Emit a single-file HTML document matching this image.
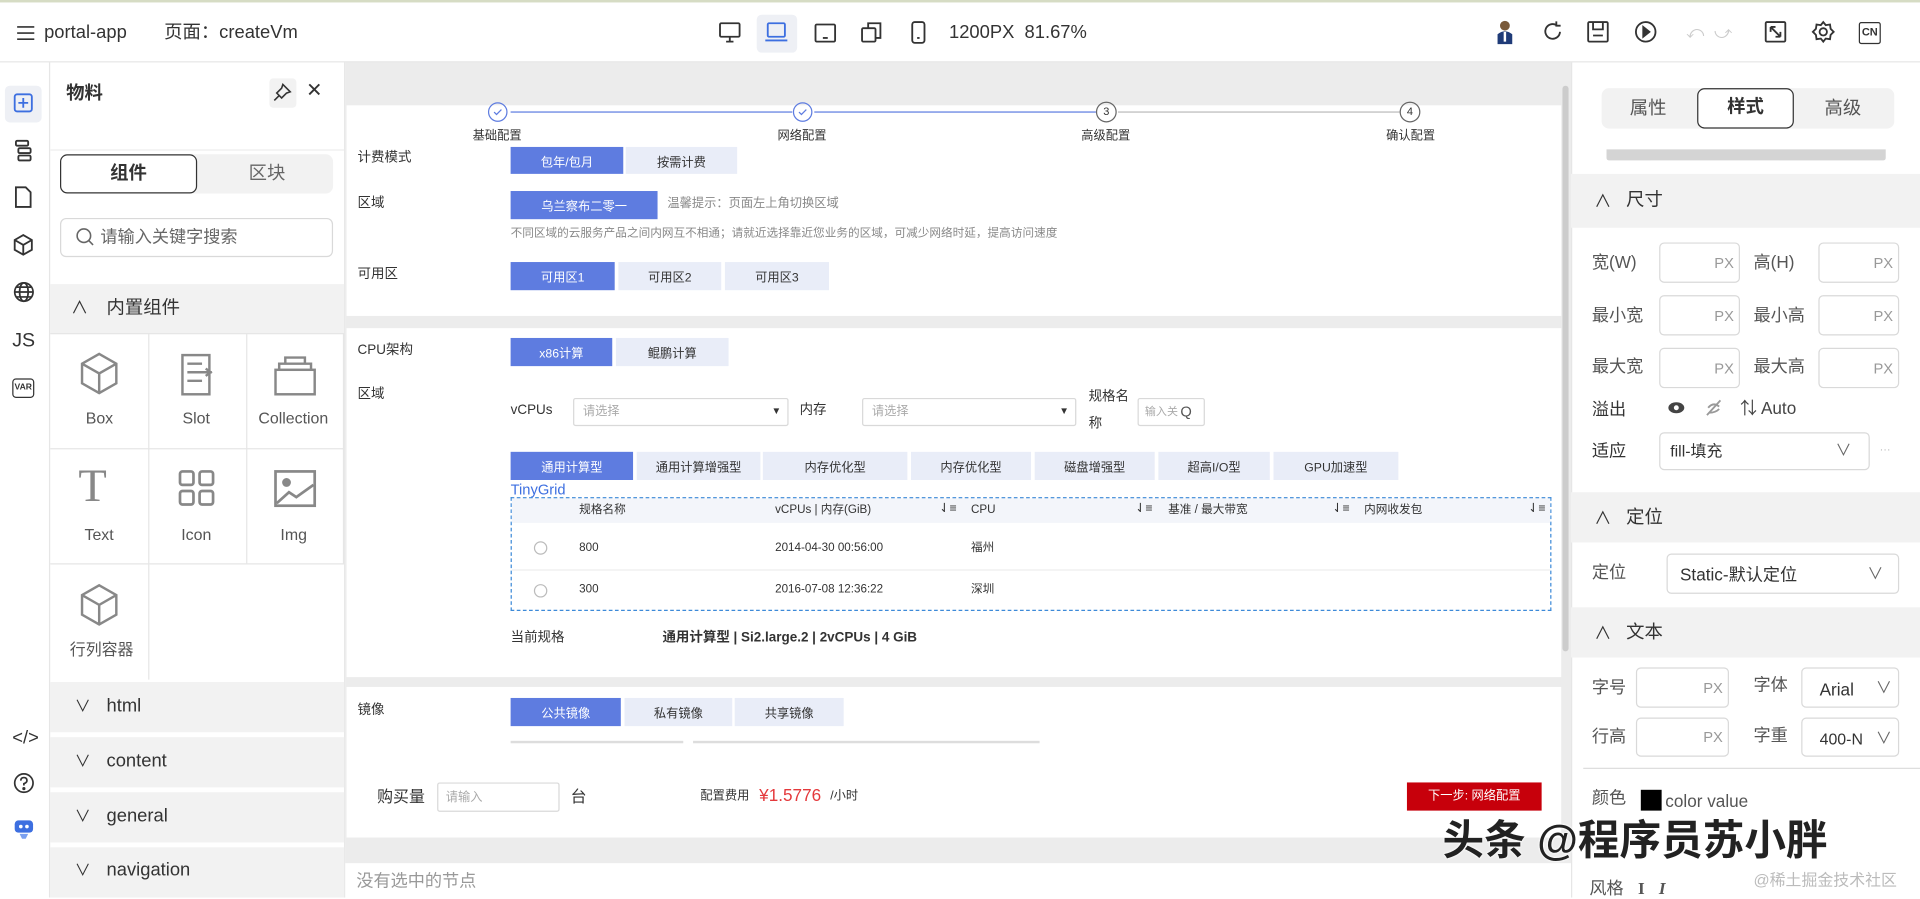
<!DOCTYPE html>
<html><head><meta charset="utf-8"><style>
*{box-sizing:border-box;margin:0;padding:0}
html,body{width:1920px;height:897px;overflow:hidden;background:#fff}
#w{position:absolute;left:0;top:0;width:1568px;height:733px;transform:scale(1.22449);transform-origin:0 0;font-family:"Liberation Sans","Noto Sans CJK SC",sans-serif;color:#333;font-size:14px}
.a{position:absolute}
.t{position:absolute;white-space:nowrap;line-height:1}
.bb{position:absolute;background:#5e7ce0;color:#fff;font-size:10px;display:flex;align-items:center;justify-content:center}
.lb{position:absolute;background:#e9edf8;color:#333;font-size:10px;display:flex;align-items:center;justify-content:center}
.inp{position:absolute;border:1px solid #d9d9d9;border-radius:4px;background:#fff}
.px{position:absolute;right:4px;top:50%;transform:translateY(-50%);font-size:12px;color:#999}
.gh{position:absolute;left:1283px;width:285px;background:#f2f2f2}
.row{position:absolute;left:41px;width:240px;height:41px;background:#f2f2f2;font-size:15px}
svg{position:absolute;overflow:visible}
</style></head><body><div id="w">
<!-- top bar -->
<div class="a" style="left:0;top:0;width:1568px;height:2px;background:#d6dcc4"></div>
<div class="a" style="left:0;top:50px;width:1568px;height:1px;background:#e6e6e6"></div>
<svg style="left:14px;top:21px" width="14" height="12"><path d="M0 1H14M0 6H14M0 11H14" stroke="#333" stroke-width="1.3"/></svg>
<div class="t" style="left:36px;top:19px;font-size:15px">portal-app</div>
<div class="t" style="left:134px;top:19px;font-size:15px">页面：createVm</div>
<div class="a" style="left:618px;top:12px;width:33px;height:31px;background:#eef0f5;border-radius:4px"></div>
<svg style="left:587px;top:18px" width="18" height="18" fill="none" stroke="#333" stroke-width="1.5"><rect x="1" y="1" width="16" height="11" rx="1"/><path d="M6 16H12M9 12V16"/></svg>
<svg style="left:625px;top:18px" width="18" height="18" fill="none" stroke="#3d6fe0" stroke-width="1.5"><rect x="2" y="1" width="14" height="11" rx="1"/><path d="M0 15H18"/></svg>
<svg style="left:665px;top:18px" width="18" height="18" fill="none" stroke="#333" stroke-width="1.5"><rect x="1" y="2" width="16" height="14" rx="1"/><path d="M7 13H11"/></svg>
<svg style="left:703px;top:17px" width="18" height="18" fill="none" stroke="#333" stroke-width="1.5"><rect x="1" y="6" width="11" height="11" rx="1"/><path d="M6 6V2H16V14H12"/></svg>
<svg style="left:744px;top:17px" width="12" height="19" fill="none" stroke="#333" stroke-width="1.5"><rect x="1" y="1" width="10" height="17" rx="2"/><path d="M5 14H7"/></svg>
<div class="t" style="left:775px;top:19px;font-size:15px">1200PX&nbsp; 81.67%</div>
<svg style="left:1221px;top:16px" width="16" height="20"><circle cx="8" cy="5" r="4" fill="#7a5a3a"/><path d="M2 20V12Q8 7 14 12V20Z" fill="#1f3b78"/><path d="M7 10H9V18H7Z" fill="#fff"/></svg>
<svg style="left:1259px;top:17px" width="18" height="18" fill="none" stroke="#333" stroke-width="1.5"><path d="M15 9A6 6 0 1 1 12 3.5M12 0.5V4H15.5"/></svg>
<svg style="left:1296px;top:17px" width="18" height="18" fill="none" stroke="#333" stroke-width="1.5"><rect x="1" y="1" width="16" height="16" rx="1"/><path d="M5 1V7H13V1M5 12H13"/></svg>
<svg style="left:1335px;top:17px" width="18" height="18" fill="none" stroke="#333" stroke-width="1.5"><circle cx="9" cy="9" r="8"/><path d="M7 5L12 9L7 13Z" fill="#333"/></svg>
<div class="t" style="left:1377px;top:19px;color:#ccc;font-size:14px">⤺&nbsp; ⤻</div>
<svg style="left:1441px;top:17px" width="18" height="18" fill="none" stroke="#333" stroke-width="1.5"><rect x="1" y="1" width="16" height="16" rx="1"/><path d="M5 5L13 13M5 5V9M5 5H9M13 13V9M13 13H9"/></svg>
<svg style="left:1480px;top:17px" width="18" height="18" fill="none" stroke="#333" stroke-width="1.5"><circle cx="9" cy="9" r="3"/><path d="M9 1L11 3.5L14.5 3L15 6.5L17.5 9L15 11.5L14.5 15L11 14.5L9 17L7 14.5L3.5 15L3 11.5L0.5 9L3 6.5L3.5 3L7 3.5Z"/></svg>
<div class="a" style="left:1518px;top:18px;width:18px;height:18px;border:1.5px solid #333;border-radius:2px;font-size:9px;font-weight:bold;text-align:center;line-height:15px">CN</div>
<!-- left strip -->
<div class="a" style="left:40px;top:51px;width:1px;height:682px;background:#e6e6e6"></div>
<div class="a" style="left:4px;top:70px;width:30px;height:30px;background:#eef0f5;border-radius:4px"></div>
<svg style="left:11px;top:76px" width="16" height="16" fill="none" stroke="#3d6fe0" stroke-width="1.5"><rect x="1" y="1" width="14" height="14" rx="2"/><path d="M8 4V12M4 8H12"/></svg>
<svg style="left:12px;top:114px" width="14" height="18" fill="none" stroke="#333" stroke-width="1.5"><rect x="1" y="1" width="10" height="4" rx="1"/><rect x="3" y="7" width="10" height="4" rx="1"/><rect x="3" y="13" width="10" height="4" rx="1"/></svg>
<svg style="left:12px;top:152px" width="14" height="18" fill="none" stroke="#333" stroke-width="1.5"><path d="M1 1H9L13 5V17H1Z"/></svg>
<svg style="left:11px;top:191px" width="16" height="18" fill="none" stroke="#333" stroke-width="1.5"><path d="M8 1L15 5V13L8 17L1 13V5ZM1 5L8 9L15 5M8 9V17"/></svg>
<svg style="left:11px;top:230px" width="17" height="17" fill="none" stroke="#333" stroke-width="1.4"><circle cx="8.5" cy="8.5" r="7.5"/><ellipse cx="8.5" cy="8.5" rx="3.5" ry="7.5"/><path d="M1 8.5H16M2.5 4.5H14.5M2.5 12.5H14.5"/></svg>
<div class="t" style="left:10px;top:271px;font-size:16px">JS</div>
<div class="a" style="left:10px;top:309px;width:18px;height:16px;border:1.5px solid #333;border-radius:3px;font-size:7px;font-weight:bold;text-align:center;line-height:13px">VAR</div>
<div class="t" style="left:10px;top:595px;font-size:15px">&lt;/&gt;</div>
<svg style="left:11px;top:631px" width="17" height="17" fill="none" stroke="#333" stroke-width="1.4"><circle cx="8.5" cy="8.5" r="7.5"/><path d="M6 6.5Q6 4 8.5 4Q11 4 11 6.5Q11 8 8.5 9V10.5"/><circle cx="8.5" cy="13" r=".6" fill="#333"/></svg>
<svg style="left:11px;top:668px" width="17" height="17"><rect x="1" y="2" width="15" height="10" rx="3" fill="#3d6fe0"/><circle cx="6" cy="7" r="1.5" fill="#fff"/><circle cx="11" cy="7" r="1.5" fill="#fff"/><path d="M5 13H12L10 17H7Z" fill="#7aa0f0"/></svg>
<!-- material panel -->
<div class="a" style="left:281px;top:51px;width:1px;height:682px;background:#e6e6e6"></div>
<div class="t" style="left:54px;top:69px;font-size:15px;font-weight:bold">物料</div>
<div class="a" style="left:220px;top:64px;width:22px;height:24px;background:#f2f2f2;border-radius:3px"></div>
<svg style="left:224px;top:68px" width="14" height="15" fill="none" stroke="#333" stroke-width="1.3"><path d="M7 1L13 7L10 8L6 12L2 8L6 4ZM4 10L0 14"/></svg>
<div class="t" style="left:250px;top:67px;font-size:16px">✕</div>
<div class="a" style="left:41px;top:122px;width:240px;height:1px;background:#eee"></div>
<div class="a" style="left:49px;top:126px;width:223px;height:32px;background:#f2f2f2;border-radius:6px"></div>
<div class="a" style="left:49px;top:126px;width:112px;height:32px;background:#fff;border:1.5px solid #333;border-radius:6px;font-size:15px;font-weight:bold;text-align:center;line-height:29px">组件</div>
<div class="t" style="left:203px;top:134px;font-size:15px;color:#666">区块</div>
<div class="inp" style="left:49px;top:178px;width:223px;height:32px;border-radius:5px"></div>
<svg style="left:62px;top:186px" width="15" height="16" fill="none" stroke="#666" stroke-width="1.3"><circle cx="6.5" cy="6.5" r="5.5"/><path d="M10.5 10.5L14 14"/></svg>
<div class="t" style="left:82px;top:186px;font-size:14px;color:#666">请输入关键字搜索</div>
<div class="a" style="left:41px;top:232px;width:240px;height:40px;background:#f2f2f2"></div>
<div class="t" style="left:58px;top:244px;font-size:14px">∧</div>
<div class="t" style="left:87px;top:244px;font-size:15px">内置组件</div>
<svg style="left:41px;top:272px" width="240" height="284" fill="none" stroke="#e6e6e6"><path d="M0 .5H240M0 94.5H240M0 188.5H240M80.5 0V283M160.5 0V188M239.5 0V188M80.5 188V283"/></svg>
<svg style="left:65px;top:287px" width="32" height="36" fill="none" stroke="#888" stroke-width="2"><path d="M16 2L30 10V26L16 34L2 26V10ZM2 10L16 18L30 10M16 18V34"/></svg>
<svg style="left:148px;top:289px" width="26" height="34" fill="none" stroke="#888" stroke-width="2"><rect x="1" y="1" width="22" height="32"/><path d="M5 8H17M5 15H25M5 22H17M20 12L24 15L20 18"/></svg>
<svg style="left:224px;top:289px" width="34" height="34" fill="none" stroke="#888" stroke-width="2"><rect x="1" y="13" width="32" height="20"/><path d="M4 13V8H30V13M9 8V3H25V8"/></svg>
<div class="t" style="left:70px;top:335px;font-size:13px;color:#555">Box</div>
<div class="t" style="left:149px;top:335px;font-size:13px;color:#555">Slot</div>
<div class="t" style="left:211px;top:335px;font-size:13px;color:#555">Collection</div>
<div class="t" style="left:64px;top:378px;font-size:38px;color:#888;font-family:'Liberation Serif',serif">T</div>
<svg style="left:146px;top:384px" width="30" height="30" fill="none" stroke="#888" stroke-width="2.2"><rect x="1" y="1" width="11" height="11" rx="2"/><rect x="17" y="1" width="11" height="11" rx="2"/><rect x="1" y="17" width="11" height="11" rx="2"/><rect x="17" y="17" width="11" height="11" rx="2"/></svg>
<svg style="left:224px;top:384px" width="34" height="30" fill="none" stroke="#888" stroke-width="2.2"><rect x="1" y="1" width="32" height="28"/><circle cx="10" cy="10" r="2.5" fill="#888"/><path d="M2 27L12 18L18 22L32 12"/></svg>
<div class="t" style="left:69px;top:430px;font-size:13px;color:#555">Text</div>
<div class="t" style="left:148px;top:430px;font-size:13px;color:#555">Icon</div>
<div class="t" style="left:229px;top:430px;font-size:13px;color:#555">Img</div>
<svg style="left:65px;top:476px" width="32" height="36" fill="none" stroke="#888" stroke-width="2"><path d="M16 2L30 10V26L16 34L2 26V10ZM2 10L16 18L30 10M16 18V34"/></svg>
<div class="t" style="left:57px;top:524px;font-size:13px;color:#555">行列容器</div>
<div class="row" style="top:557px"><span class="t" style="left:20px;top:13px;font-size:13px">∨</span><span class="t" style="left:46px;top:12px">html</span></div>
<div class="row" style="top:602px"><span class="t" style="left:20px;top:13px;font-size:13px">∨</span><span class="t" style="left:46px;top:12px">content</span></div>
<div class="row" style="top:647px"><span class="t" style="left:20px;top:13px;font-size:13px">∨</span><span class="t" style="left:46px;top:12px">general</span></div>
<div class="row" style="top:692px"><span class="t" style="left:20px;top:12px;font-size:13px">∨</span><span class="t" style="left:46px;top:11px">navigation</span></div>
<!-- canvas -->
<div class="a" style="left:282px;top:51px;width:1001px;height:654px;background:#ececec"></div>
<div class="a" style="left:283px;top:86px;width:992px;height:172px;background:#fff"></div>
<div class="a" style="left:283px;top:268px;width:992px;height:285px;background:#fff"></div>
<div class="a" style="left:283px;top:561px;width:992px;height:123px;background:#fff"></div>
<div class="a" style="left:1276px;top:70px;width:5px;height:462px;background:#ccc;border-radius:3px"></div>
<div class="a" style="left:282px;top:705px;width:1001px;height:28px;background:#fff"></div>
<div class="t" style="left:291px;top:712px;font-size:14px;color:#999">没有选中的节点</div>
<!-- stepper -->
<div class="a" style="left:417px;top:91px;width:230px;height:1px;background:#5e7ce0"></div>
<div class="a" style="left:665px;top:91px;width:230px;height:1px;background:#5e7ce0"></div>
<div class="a" style="left:913px;top:91px;width:230px;height:1px;background:#bbb"></div>
<svg style="left:398px;top:83px" width="17" height="17" fill="none" stroke="#5e7ce0"><circle cx="8.5" cy="8.5" r="7.5"/><path d="M5.5 8.5L7.5 10.5L11.5 6.5"/></svg>
<svg style="left:647px;top:83px" width="17" height="17" fill="none" stroke="#5e7ce0"><circle cx="8.5" cy="8.5" r="7.5"/><path d="M5.5 8.5L7.5 10.5L11.5 6.5"/></svg>
<div class="a" style="left:895px;top:83px;width:17px;height:17px;border:1px solid #666;border-radius:50%;font-size:9px;text-align:center;line-height:15px">3</div>
<div class="a" style="left:1143px;top:83px;width:17px;height:17px;border:1px solid #666;border-radius:50%;font-size:9px;text-align:center;line-height:15px">4</div>
<div class="t" style="left:386px;top:107px;font-size:10px">基础配置</div>
<div class="t" style="left:635px;top:107px;font-size:10px">网络配置</div>
<div class="t" style="left:883px;top:107px;font-size:10px">高级配置</div>
<div class="t" style="left:1132px;top:107px;font-size:10px">确认配置</div>
<!-- form -->
<div class="t" style="left:292px;top:124px;font-size:11px">计费模式</div>
<div class="bb" style="left:417px;top:120px;width:92px;height:22px">包年/包月</div>
<div class="lb" style="left:511px;top:120px;width:91px;height:22px">按需计费</div>
<div class="t" style="left:292px;top:161px;font-size:11px">区域</div>
<div class="bb" style="left:417px;top:156px;width:120px;height:23px">乌兰察布二零一</div>
<div class="t" style="left:545px;top:162px;font-size:10px;color:#888">温馨提示：页面左上角切换区域</div>
<div class="t" style="left:417px;top:186px;font-size:9.5px;color:#888">不同区域的云服务产品之间内网互不相通；请就近选择靠近您业务的区域，可减少网络时延，提高访问速度</div>
<div class="t" style="left:292px;top:219px;font-size:11px">可用区</div>
<div class="bb" style="left:417px;top:214px;width:85px;height:23px">可用区1</div>
<div class="lb" style="left:505px;top:214px;width:84px;height:23px">可用区2</div>
<div class="lb" style="left:592px;top:214px;width:85px;height:23px">可用区3</div>
<div class="t" style="left:292px;top:281px;font-size:11px">CPU架构</div>
<div class="bb" style="left:417px;top:276px;width:83px;height:23px">x86计算</div>
<div class="lb" style="left:503px;top:276px;width:92px;height:23px">鲲鹏计算</div>
<div class="t" style="left:292px;top:317px;font-size:11px">区域</div>
<div class="t" style="left:417px;top:330px;font-size:11px">vCPUs</div>
<div class="inp" style="left:468px;top:325px;width:176px;height:23px;border-radius:2px"><span class="t" style="left:7px;top:6px;font-size:10px;color:#aaa">请选择</span><span class="t" style="right:5px;top:6px;font-size:8px;color:#333">▼</span></div>
<div class="t" style="left:653px;top:330px;font-size:11px">内存</div>
<div class="inp" style="left:704px;top:325px;width:175px;height:23px;border-radius:2px"><span class="t" style="left:7px;top:6px;font-size:10px;color:#aaa">请选择</span><span class="t" style="right:5px;top:6px;font-size:8px;color:#333">▼</span></div>
<div class="t" style="left:889px;top:319px;font-size:11px">规格名</div>
<div class="t" style="left:889px;top:341px;font-size:11px">称</div>
<div class="inp" style="left:929px;top:325px;width:55px;height:23px;border-radius:2px"><span class="t" style="left:5px;top:6px;font-size:9px;color:#aaa">输入关</span><span class="t" style="left:34px;top:4px;font-size:12px;color:#555">Q</span></div>
<div class="bb" style="left:417px;top:369px;width:100px;height:23px">通用计算型</div>
<div class="lb" style="left:520px;top:369px;width:101px;height:23px">通用计算增强型</div>
<div class="lb" style="left:623px;top:369px;width:118px;height:23px">内存优化型</div>
<div class="lb" style="left:744px;top:369px;width:98px;height:23px">内存优化型</div>
<div class="lb" style="left:845px;top:369px;width:98px;height:23px">磁盘增强型</div>
<div class="lb" style="left:946px;top:369px;width:91px;height:23px">超高I/O型</div>
<div class="lb" style="left:1040px;top:369px;width:102px;height:23px">GPU加速型</div>
<div class="t" style="left:417px;top:394px;font-size:12px;color:#3d6fe0">TinyGrid</div>
<div class="a" style="left:417px;top:406px;width:850px;height:93px;border:1px dashed #3d8ad8"></div>
<div class="a" style="left:418px;top:407px;width:848px;height:20px;background:#f3f5fa"></div>
<div class="a" style="left:418px;top:465px;width:848px;height:1px;background:#eee"></div>
<div class="t" style="left:473px;top:412px;font-size:9.5px">规格名称</div>
<div class="t" style="left:633px;top:412px;font-size:9.5px">vCPUs | 内存(GiB)</div>
<div class="t" style="left:793px;top:412px;font-size:9.5px">CPU</div>
<div class="t" style="left:954px;top:412px;font-size:9.5px">基准 / 最大带宽</div>
<div class="t" style="left:1114px;top:412px;font-size:9.5px">内网收发包</div>
<div class="t" style="left:767px;top:411px;font-size:10px">⇃≡</div>
<div class="t" style="left:927px;top:411px;font-size:10px">⇃≡</div>
<div class="t" style="left:1088px;top:411px;font-size:10px">⇃≡</div>
<div class="t" style="left:1248px;top:411px;font-size:10px">⇃≡</div>
<div class="a" style="left:436px;top:442px;width:11px;height:11px;border:1px solid #bbb;border-radius:50%"></div>
<div class="a" style="left:436px;top:477px;width:11px;height:11px;border:1px solid #bbb;border-radius:50%"></div>
<div class="t" style="left:473px;top:443px;font-size:9.5px">800</div>
<div class="t" style="left:633px;top:443px;font-size:9.5px">2014-04-30 00:56:00</div>
<div class="t" style="left:793px;top:443px;font-size:9.5px">福州</div>
<div class="t" style="left:473px;top:477px;font-size:9.5px">300</div>
<div class="t" style="left:633px;top:477px;font-size:9.5px">2016-07-08 12:36:22</div>
<div class="t" style="left:793px;top:477px;font-size:9.5px">深圳</div>
<div class="t" style="left:417px;top:516px;font-size:11px">当前规格</div>
<div class="t" style="left:541px;top:516px;font-size:11px;font-weight:bold">通用计算型 | Si2.large.2 | 2vCPUs | 4 GiB</div>
<div class="t" style="left:292px;top:575px;font-size:11px">镜像</div>
<div class="bb" style="left:417px;top:570px;width:90px;height:23px">公共镜像</div>
<div class="lb" style="left:510px;top:570px;width:88px;height:23px">私有镜像</div>
<div class="lb" style="left:600px;top:570px;width:89px;height:23px">共享镜像</div>
<div class="a" style="left:417px;top:605px;width:141px;height:2px;background:#ddd"></div>
<div class="a" style="left:566px;top:605px;width:283px;height:2px;background:#ddd"></div>
<div class="t" style="left:308px;top:644px;font-size:13px">购买量</div>
<div class="inp" style="left:357px;top:639px;width:100px;height:24px;border-radius:2px"><span class="t" style="left:6px;top:7px;font-size:10px;color:#aaa">请输入</span></div>
<div class="t" style="left:466px;top:644px;font-size:13px">台</div>
<div class="t" style="left:572px;top:646px;font-size:10px">配置费用</div>
<div class="t" style="left:620px;top:642px;font-size:14px;color:#e4393c">¥1.5776</div>
<div class="t" style="left:678px;top:646px;font-size:10px">/小时</div>
<div class="a" style="left:1149px;top:639px;width:110px;height:23px;background:#c7000b;color:#fff;font-size:10px;text-align:center;line-height:23px">下一步: 网络配置</div>
<!-- right panel -->
<div class="a" style="left:1283px;top:51px;width:1px;height:682px;background:#e6e6e6"></div>
<div class="a" style="left:1308px;top:72px;width:239px;height:33px;background:#f2f2f2;border-radius:6px"></div>
<div class="t" style="left:1331px;top:81px;font-size:15px;color:#555">属性</div>
<div class="a" style="left:1386px;top:72px;width:79px;height:33px;background:#fff;border:1.5px solid #333;border-radius:6px;font-size:15px;font-weight:bold;text-align:center;line-height:30px">样式</div>
<div class="t" style="left:1490px;top:81px;font-size:15px;color:#555">高级</div>
<div class="a" style="left:1312px;top:122px;width:228px;height:9px;background:#d4d4d4;border-radius:0 0 2px 2px"></div>
<div class="gh" style="top:142px;height:44px"></div>
<div class="t" style="left:1302px;top:157px;font-size:14px">∧</div>
<div class="t" style="left:1328px;top:156px;font-size:15px">尺寸</div>
<div class="t" style="left:1300px;top:207px;font-size:14px;color:#555">宽(W)</div>
<div class="inp" style="left:1355px;top:198px;width:66px;height:33px"><span class="px">PX</span></div>
<div class="t" style="left:1432px;top:207px;font-size:14px;color:#555">高(H)</div>
<div class="inp" style="left:1485px;top:198px;width:66px;height:33px"><span class="px">PX</span></div>
<div class="t" style="left:1300px;top:250px;font-size:14px;color:#555">最小宽</div>
<div class="inp" style="left:1355px;top:241px;width:66px;height:33px"><span class="px">PX</span></div>
<div class="t" style="left:1432px;top:250px;font-size:14px;color:#555">最小高</div>
<div class="inp" style="left:1485px;top:241px;width:66px;height:33px"><span class="px">PX</span></div>
<div class="t" style="left:1300px;top:292px;font-size:14px;color:#555">最大宽</div>
<div class="inp" style="left:1355px;top:284px;width:66px;height:33px"><span class="px">PX</span></div>
<div class="t" style="left:1432px;top:292px;font-size:14px;color:#555">最大高</div>
<div class="inp" style="left:1485px;top:284px;width:66px;height:33px"><span class="px">PX</span></div>
<div class="t" style="left:1300px;top:327px;font-size:14px">溢出</div>
<svg style="left:1362px;top:327px" width="14" height="12"><ellipse cx="7" cy="6" rx="6.5" ry="4.5" fill="#444"/><circle cx="7" cy="6" r="2" fill="#fff"/></svg>
<svg style="left:1392px;top:326px" width="15" height="14" fill="none" stroke="#999" stroke-width="1.5"><path d="M2 13L13 1M3 7Q7 2 12 6M4 11Q9 11 12 8"/></svg>
<div class="t" style="left:1421px;top:326px;font-size:14px;color:#444">⇅ Auto</div>
<div class="t" style="left:1300px;top:361px;font-size:14px">适应</div>
<div class="inp" style="left:1355px;top:353px;width:172px;height:31px"><span class="t" style="left:8px;top:8px;font-size:13px">fill-填充</span><span class="t" style="left:143px;top:7px;font-size:13px;color:#666">∨</span></div>
<div class="t" style="left:1535px;top:363px;font-size:9px;color:#bbb">···</div>
<div class="gh" style="top:402px;height:41px"></div>
<div class="t" style="left:1302px;top:416px;font-size:14px">∧</div>
<div class="t" style="left:1328px;top:415px;font-size:15px">定位</div>
<div class="t" style="left:1300px;top:460px;font-size:14px;color:#555">定位</div>
<div class="inp" style="left:1361px;top:452px;width:190px;height:33px"><span class="t" style="left:10px;top:9px;font-size:14px">Static-默认定位</span><span class="t" style="left:163px;top:9px;font-size:13px;color:#666">∨</span></div>
<div class="gh" style="top:496px;height:41px"></div>
<div class="t" style="left:1302px;top:510px;font-size:14px">∧</div>
<div class="t" style="left:1328px;top:509px;font-size:15px">文本</div>
<div class="t" style="left:1300px;top:554px;font-size:14px;color:#555">字号</div>
<div class="inp" style="left:1336px;top:545px;width:76px;height:33px"><span class="px">PX</span></div>
<div class="t" style="left:1432px;top:552px;font-size:14px;color:#555">字体</div>
<div class="inp" style="left:1471px;top:545px;width:80px;height:33px"><span class="t" style="left:14px;top:10px;font-size:14px">Arial</span><span class="t" style="left:60px;top:9px;font-size:13px;color:#666">∨</span></div>
<div class="t" style="left:1300px;top:594px;font-size:14px;color:#555">行高</div>
<div class="inp" style="left:1336px;top:586px;width:76px;height:32px"><span class="px">PX</span></div>
<div class="t" style="left:1432px;top:593px;font-size:14px;color:#555">字重</div>
<div class="inp" style="left:1471px;top:586px;width:80px;height:32px"><span class="t" style="left:14px;top:10px;font-size:13px">400-N</span><span class="t" style="left:60px;top:9px;font-size:13px;color:#666">∨</span></div>
<div class="a" style="left:1293px;top:627px;width:275px;height:1px;background:#ddd"></div>
<div class="t" style="left:1300px;top:644px;font-size:14px;color:#555">颜色</div>
<div class="a" style="left:1340px;top:645px;width:17px;height:17px;background:#000"></div>
<div class="t" style="left:1360px;top:647px;font-size:14px;color:#555">color value</div>
<div class="t" style="left:1298px;top:718px;font-size:14px;color:#555">风格&nbsp;&nbsp; <b style="font-family:'Liberation Serif',serif">I</b>&nbsp;&nbsp; <i style="font-family:'Liberation Serif',serif;font-weight:bold">I</i></div>
<div class="t" style="left:1178px;top:670px;font-size:34px;color:#222;font-weight:bold;text-shadow:0 0 2px #fff,0 0 2px #fff">头条 @程序员苏小胖</div>
<div class="t" style="left:1432px;top:712px;font-size:13px;color:#bbb">@稀土掘金技术社区</div>
</div></body></html>
